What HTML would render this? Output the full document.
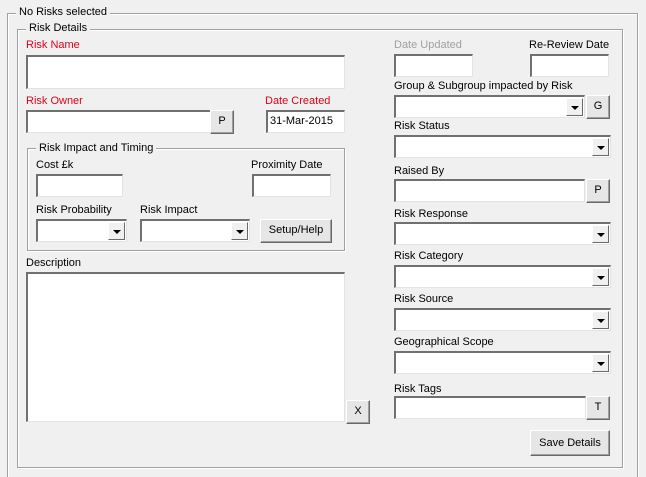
<!DOCTYPE html>
<html><head><meta charset="utf-8"><style>
*{box-sizing:border-box;margin:0;padding:0}
html,body{width:646px;height:477px;overflow:hidden}
body{background:#f0f0f0;font-family:"Liberation Sans",sans-serif;font-size:11px;color:#000;position:relative}
.lbl{position:absolute;white-space:nowrap;line-height:13px}
.red{color:#e0001b}
.gray{color:#a0a0a0}
.frame{position:absolute;border:1px solid #a0a0a0;box-shadow:inset 1px 1px 0 #fff,1px 1px 0 #fff}
.legend{position:absolute;background:#f0f0f0;padding:0 3px;line-height:13px;white-space:nowrap}
.tb{position:absolute;background:#fff;border-top:2px solid #707070;border-left:2px solid #707070;border-right:1px solid #e3e3e3;border-bottom:1px solid #e3e3e3}
.btn{position:absolute;background:#e6e6e6;border-top:1px solid #fff;border-left:1px solid #fff;border-right:1px solid #696969;border-bottom:1px solid #696969;box-shadow:inset -1px -1px 0 #a0a0a0;text-align:center;line-height:21px}
.cb{position:absolute;background:#fff;border-top:2px solid #707070;border-left:2px solid #707070;border-right:1px solid #e3e3e3;border-bottom:1px solid #e3e3e3}
.cb .dd{position:absolute;right:1px;top:1px;bottom:1px;width:17px;background:#f0f0f0;border-top:1px solid #fff;border-left:1px solid #fff;border-right:1px solid #696969;border-bottom:1px solid #696969}
.cb .dd:after{content:"";position:absolute;left:4px;top:7px;border-left:4px solid transparent;border-right:4px solid transparent;border-top:4px solid #000}
</style></head><body>
<div class="frame" style="left:7px;top:13px;width:631px;height:470px"></div>
<div class="legend" style="left:16px;top:6px">No Risks selected</div>
<div class="frame" style="left:17px;top:29px;width:606px;height:439px"></div>
<div class="legend" style="left:26px;top:22px">Risk Details</div>

<div class="lbl red" style="left:26px;top:39px">Risk Name</div>
<div class="tb" style="left:26px;top:55px;width:319px;height:34px"></div>

<div class="lbl red" style="left:26px;top:95px">Risk Owner</div>
<div class="tb" style="left:26px;top:110px;width:185px;height:23px"></div>
<div class="btn" style="left:210px;top:110px;width:24px;height:24px">P</div>
<div class="lbl red" style="left:265px;top:95px">Date Created</div>
<div class="tb" style="left:266px;top:110px;width:79px;height:23px;padding:2px 0 0 2px;line-height:15px">31-Mar-2015</div>

<div class="frame" style="left:27px;top:148px;width:318px;height:103px"></div>
<div class="legend" style="left:36px;top:142px">Risk Impact and Timing</div>
<div class="lbl" style="left:36px;top:159px">Cost £k</div>
<div class="tb" style="left:36px;top:174px;width:87px;height:23px"></div>
<div class="lbl" style="left:251px;top:159px">Proximity Date</div>
<div class="tb" style="left:252px;top:174px;width:79px;height:23px"></div>
<div class="lbl" style="left:36px;top:204px">Risk Probability</div>
<div class="cb" style="left:36px;top:219px;width:91px;height:23px"><div class="dd"></div></div>
<div class="lbl" style="left:140px;top:204px">Risk Impact</div>
<div class="cb" style="left:140px;top:219px;width:110px;height:23px"><div class="dd"></div></div>
<div class="btn" style="left:260px;top:219px;width:72px;height:24px">Setup/Help</div>

<div class="lbl" style="left:26px;top:257px">Description</div>
<div class="tb" style="left:26px;top:272px;width:319px;height:150px"></div>
<div class="btn" style="left:346px;top:400px;width:24px;height:24px">X</div>

<div class="lbl gray" style="left:394px;top:39px">Date Updated</div>
<div class="tb" style="left:394px;top:54px;width:79px;height:23px"></div>
<div class="lbl" style="left:529px;top:39px">Re-Review Date</div>
<div class="tb" style="left:530px;top:54px;width:79px;height:23px"></div>

<div class="lbl" style="left:394px;top:80px">Group &amp; Subgroup impacted by Risk</div>
<div class="cb" style="left:394px;top:95px;width:191px;height:23px"><div class="dd"></div></div>
<div class="btn" style="left:586px;top:95px;width:24px;height:24px">G</div>

<div class="lbl" style="left:394px;top:120px">Risk Status</div>
<div class="cb" style="left:394px;top:135px;width:217px;height:23px"><div class="dd"></div></div>

<div class="lbl" style="left:394px;top:165px">Raised By</div>
<div class="tb" style="left:394px;top:179px;width:191px;height:23px"></div>
<div class="btn" style="left:586px;top:179px;width:24px;height:24px">P</div>

<div class="lbl" style="left:394px;top:208px">Risk Response</div>
<div class="cb" style="left:394px;top:222px;width:217px;height:23px"><div class="dd"></div></div>
<div class="lbl" style="left:394px;top:250px">Risk Category</div>
<div class="cb" style="left:394px;top:265px;width:217px;height:23px"><div class="dd"></div></div>
<div class="lbl" style="left:394px;top:293px">Risk Source</div>
<div class="cb" style="left:394px;top:308px;width:217px;height:23px"><div class="dd"></div></div>
<div class="lbl" style="left:394px;top:336px">Geographical Scope</div>
<div class="cb" style="left:394px;top:351px;width:217px;height:23px"><div class="dd"></div></div>

<div class="lbl" style="left:394px;top:383px">Risk Tags</div>
<div class="tb" style="left:394px;top:396px;width:192px;height:23px"></div>
<div class="btn" style="left:586px;top:396px;width:24px;height:24px">T</div>

<div class="btn" style="left:530px;top:430px;width:80px;height:26px;line-height:24px">Save Details</div>
</body></html>
